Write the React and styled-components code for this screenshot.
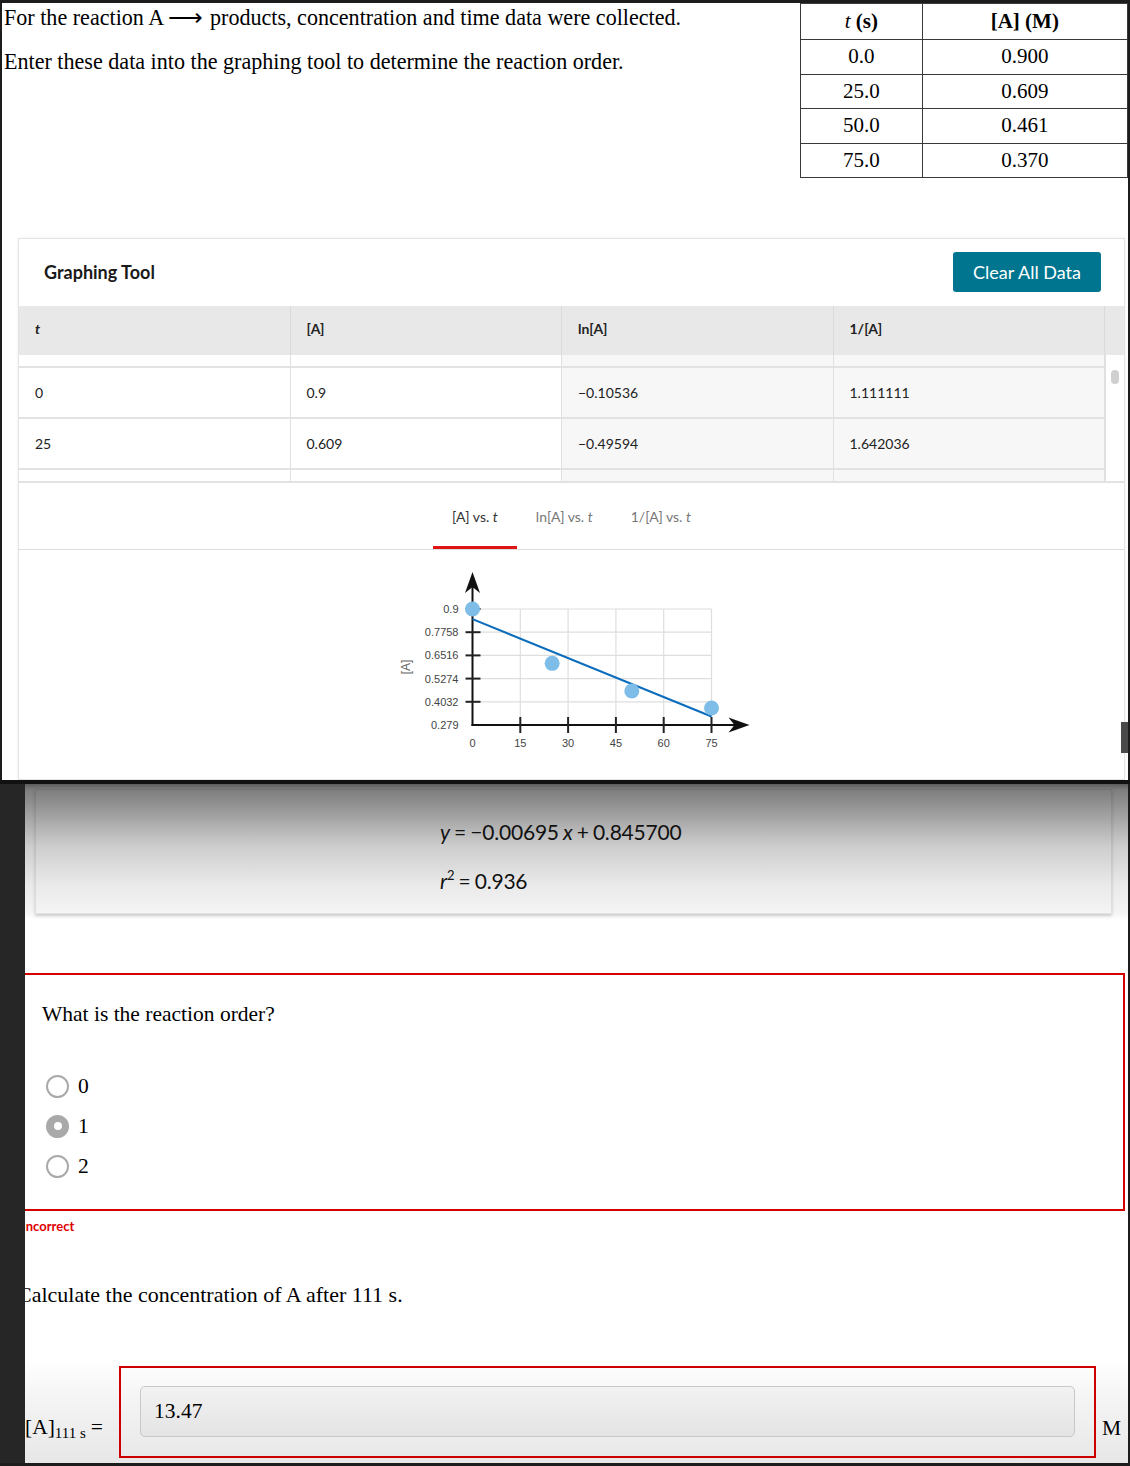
import React from "react";
import styled, { createGlobalStyle } from "styled-components";

const serif = `"Liberation Serif", "Times New Roman", serif`;
const sans = `Lato, "Open Sans", "Noto Sans", sans-serif`;

const GlobalStyle = createGlobalStyle`
  html, body { margin: 0; padding: 0; background: #fff; overflow: hidden; }
  * { box-sizing: border-box; }
`;

const Page = styled.div`
  width: 1130px;
  height: 1466px;
  display: flex;
  flex-direction: column;
`;

const TopFrame = styled.section`
  position: relative;
  flex: none;
  height: 780px;
  border-top: 3px solid #1c1c1c;
  border-left: 2px solid #1c1c1c;
  border-right: 2px solid #1c1c1c;
  background: #fff;
  overflow: hidden;
`;

const WindowThumb = styled.div`
  position: absolute;
  right: 0;
  top: 719px;
  width: 7px;
  height: 31px;
  background: #4a4a4a;
`;

const Intro = styled.div`
  display: flex;
  justify-content: space-between;
  align-items: flex-start;
`;

const IntroText = styled.div`
  padding: 3px 0 0 2px;
  font-family: ${serif};
  font-size: 22.1px;
  color: #000;
`;

const IntroLine = styled.p`
  margin: 0 0 20px;
  line-height: 24px;
  white-space: nowrap;
`;

const Arrow = styled.span`
  display: inline-block;
  margin: 0 2px;
  transform: scaleX(1.1);
`;

const DataTable = styled.table`
  border-collapse: collapse;
  width: 328px;
  font-family: ${serif};
  font-size: 21px;
  color: #000;
`;

const HeadCell = styled.th`
  height: 36px;
  width: ${(p) => p.$w}px;
  border: 1px solid #3a3a3a;
  font-weight: normal;
  text-align: center;
  padding: 0;
`;

const Cell = styled.td`
  height: 34.5px;
  border: 1px solid #3a3a3a;
  text-align: center;
  padding: 0;
`;

const ToolCard = styled.div`
  margin: 60px 3px 0 16px;
  border: 1px solid #e4e4e4;
  box-shadow: 0 0 4px rgba(0, 0, 0, 0.06);
  background: #fff;
  font-family: ${sans};
  color: #222;
`;

const ToolHeader = styled.div`
  height: 67px;
  display: flex;
  align-items: center;
  justify-content: space-between;
  padding: 0 23px 2px 25px;
`;

const ToolTitle = styled.h2`
  margin: 0;
  font-size: 18px;
  font-weight: 700;
  color: #1a1a1a;
`;

const ClearButton = styled.button`
  width: 148px;
  height: 40px;
  border: none;
  border-radius: 3px;
  background: #007590;
  color: #fff;
  font-family: ${sans};
  font-size: 18px;
  padding: 0;
`;

const GridHead = styled.div`
  display: grid;
  grid-template-columns: repeat(4, 1fr) 19px;
  height: 49px;
  background: #e8e8e8;
`;

const GridHeadCell = styled.div`
  display: flex;
  align-items: center;
  padding: 0 0 4px 16px;
  font-size: 14px;
  font-weight: 700;
  border-right: 1px solid #dadada;
  &:last-child { border-right: none; }
`;

const GridBody = styled.div`
  display: flex;
  height: 128px;
  border-bottom: 2px solid #e2e2e2;
`;

const Rows = styled.div`
  flex: 1;
`;

const Row = styled.div`
  display: grid;
  grid-template-columns: repeat(4, 1fr);
  height: ${(p) => p.$h}px;
  border-bottom: ${(p) => (p.$last ? "none" : "2px solid #e2e2e2")};
`;

const GridCell = styled.div`
  display: flex;
  align-items: center;
  padding-left: 16px;
  font-size: 14px;
  color: #222;
  background: ${(p) => (p.$shade ? "#f7f7f7" : "#fff")};
  border-right: 1px solid #e0e0e0;
`;

const ScrollTrack = styled.div`
  width: 19px;
  border-left: 1px solid #e0e0e0;
  background: #fff;
  padding: 15px 0 0 5px;
`;

const ScrollThumb = styled.div`
  width: 8px;
  height: 14px;
  border-radius: 4px;
  background: #d0d0d0;
`;

const TabBar = styled.div`
  display: flex;
  justify-content: center;
  height: 67px;
  border-bottom: 1px solid #dddddd;
`;

const Tab = styled.div`
  display: flex;
  align-items: center;
  padding: 4px 19px 0;
  font-size: 14px;
  color: ${(p) => (p.$active ? "#333" : "#777")};
  border-bottom: 3px solid ${(p) => (p.$active ? "#e01414" : "transparent")};
`;

const ChartWrap = styled.div`
  display: flex;
  justify-content: center;
`;

const Band = styled.div`
  flex: none;
  height: 4px;
  background: #111;
`;

const LowerFrame = styled.section`
  position: relative;
  flex: 1;
  padding-top: 5px;
  border-right: 2px solid #1c1c1c;
  border-bottom: 3px solid #1c1c1c;
  overflow: hidden;
  background: linear-gradient(
    to bottom,
    #5c5c5c 0px,
    #7e7e7e 6px,
    #8e8e8e 18px,
    #cdcdcd 62px,
    #e9e9e9 100px,
    #f4f4f4 128px,
    #ffffff 136px,
    #ffffff 575px,
    #f3f3f3 620px,
    #e7e7e7 679px
  );
`;

const EdgeStrip = styled.div`
  position: absolute;
  left: 0;
  top: 0;
  bottom: 0;
  width: 25px;
  background: #262626;
  z-index: 2;
`;

const EquationPanel = styled.div`
  height: 125px;
  margin: 0 16px 0 35px;
  padding: 29px 0 0 404px;
  border: 1px solid rgba(0, 0, 0, 0.08);
  box-shadow: 0 2px 3px rgba(0, 0, 0, 0.18);
  font-family: ${sans};
  font-size: 21px;
  color: #111;
`;

const EqLine = styled.div`
  line-height: 26px;
  margin-bottom: 23px;
  white-space: nowrap;
  letter-spacing: -0.2px;
  word-spacing: -1px;
`;

const Sup = styled.sup`
  font-size: 13px;
  line-height: 0;
  vertical-align: 9px;
`;

const QuestionBox = styled.div`
  margin: 59px 3px 0 20px;
  border: 2px solid #d40000;
  padding: 26px 20px 23px;
  font-family: ${serif};
  font-size: 21.5px;
  color: #000;
`;

const QuestionText = styled.p`
  margin: 0;
  line-height: 26px;
`;

const RadioList = styled.div`
  margin-top: 39px;
`;

const RadioRow = styled.label`
  display: flex;
  align-items: center;
  gap: 9px;
  height: 40px;
  padding-left: 4px;
`;

const Radio = styled.span`
  width: 23px;
  height: 23px;
  border-radius: 50%;
  border: 2px solid #a9a9a9;
  background: ${(p) => (p.$checked ? "#a9a9a9" : "#fff")};
  display: flex;
  align-items: center;
  justify-content: center;
  &::after {
    content: "";
    width: 8px;
    height: 8px;
    border-radius: 50%;
    background: ${(p) => (p.$checked ? "#fff" : "transparent")};
  }
`;

const Feedback = styled.div`
  margin: 6px 0 0 22px;
  font-family: ${sans};
  font-size: 13px;
  font-weight: 700;
  line-height: 18px;
  color: #e00000;
`;

const Prompt = styled.p`
  margin: 47px 0 0 17px;
  font-family: ${serif};
  font-size: 22px;
  line-height: 26px;
  color: #000;
`;

const AnswerRow = styled.div`
  display: flex;
  align-items: flex-end;
  margin: 58px 0 0 25px;
  font-family: ${serif};
  font-size: 21.5px;
  color: #000;
`;

const AnswerLabel = styled.span`
  flex: none;
  width: 94px;
  line-height: 26px;
  padding-bottom: 18px;
  white-space: nowrap;
`;

const Sub = styled.sub`
  font-size: 15px;
  line-height: 0;
  vertical-align: -4px;
  margin-right: 5px;
`;

const AnswerBox = styled.div`
  width: 977px;
  height: 92px;
  border: 2px solid #cc0000;
  padding: 18px 19px;
`;

const AnswerInput = styled.div`
  height: 51px;
  border: 1px solid #c8c8c8;
  border-radius: 5px;
  background: linear-gradient(to bottom, #f2f2f2, #e4e4e4);
  padding: 11px 13px 0;
  line-height: 26px;
`;

const Unit = styled.span`
  line-height: 26px;
  padding-bottom: 17px;
  margin-left: 6px;
`;

const X = (t) => 472 + (t * 239) / 75;
const Y = (v) => 726 - ((v - 0.279) / 0.621) * 116;

const yTicks = [0.9, 0.7758, 0.6516, 0.5274, 0.4032];
const yLabels = ["0.9", "0.7758", "0.6516", "0.5274", "0.4032", "0.279"];
const yVals = [0.9, 0.7758, 0.6516, 0.5274, 0.4032, 0.279];
const xTicks = [15, 30, 45, 60, 75];
const points = [
  [0, 0.9],
  [25, 0.609],
  [50, 0.461],
  [75, 0.37],
];

function Chart() {
  return (
    <svg width="400" height="229" viewBox="0 0 400 229">
      <g transform="translate(-371.5,-551)" fontFamily='"Liberation Sans", Arial, sans-serif'>
        {yTicks.map((v) => (
          <line key={"gh" + v} x1={472} x2={711} y1={Y(v)} y2={Y(v)} stroke="#dedede" strokeWidth="1.2" />
        ))}
        {xTicks.map((t) => (
          <line key={"gv" + t} x1={X(t)} x2={X(t)} y1={610} y2={726} stroke="#dedede" strokeWidth="1.2" />
        ))}
        <line x1="472" y1="727" x2="472" y2="586" stroke="#111" strokeWidth="2" />
        <polygon points="472,573 464.5,594 472,588 479.5,594" fill="#111" />
        <line x1="471" y1="726" x2="735" y2="726" stroke="#111" strokeWidth="2" />
        <polygon points="749,726 728,718.5 734,726 728,733.5" fill="#111" />
        {yTicks.map((v) => (
          <line key={"yt" + v} x1={465} x2={480} y1={Y(v)} y2={Y(v)} stroke="#222" strokeWidth="2" />
        ))}
        {xTicks.map((t) => (
          <line key={"xt" + t} x1={X(t)} x2={X(t)} y1={718} y2={734} stroke="#222" strokeWidth="2" />
        ))}
        {yVals.map((v, i) => (
          <text key={"yl" + v} x={458} y={Y(v) + 4} textAnchor="end" fontSize="11" fill="#444">
            {yLabels[i]}
          </text>
        ))}
        {[0, ...xTicks].map((t) => (
          <text key={"xl" + t} x={X(t)} y={748} textAnchor="middle" fontSize="11" fill="#444">
            {t}
          </text>
        ))}
        <text x="409" y="668" fontSize="12" fill="#666" textAnchor="middle" transform="rotate(-90 409 668)">
          [A]
        </text>
        <line x1={X(0)} y1={Y(0.8457)} x2={X(75)} y2={Y(0.8457 - 0.00695 * 75)} stroke="#0a6cbd" strokeWidth="2" />
        {points.map(([t, v]) => (
          <circle key={"p" + t} cx={X(t)} cy={Y(v)} r="7.5" fill="#7dbde8" />
        ))}
      </g>
    </svg>
  );
}

const gridRows = [
  ["0", "0.9", "\u22120.10536", "1.111111"],
  ["25", "0.609", "\u22120.49594", "1.642036"],
];

export default function App() {
  return (
    <Page>
      <GlobalStyle />
      <TopFrame>
        <Intro>
          <IntroText>
            <IntroLine>
              For the reaction A <Arrow>{"\u27F6"}</Arrow> products, concentration and time data were collected.
            </IntroLine>
            <IntroLine>Enter these data into the graphing tool to determine the reaction order.</IntroLine>
          </IntroText>
          <DataTable>
            <thead>
              <tr>
                <HeadCell $w={122}>
                  <i>t</i> <b>(s)</b>
                </HeadCell>
                <HeadCell $w={206}>
                  <b>[A] (M)</b>
                </HeadCell>
              </tr>
            </thead>
            <tbody>
              {[
                ["0.0", "0.900"],
                ["25.0", "0.609"],
                ["50.0", "0.461"],
                ["75.0", "0.370"],
              ].map(([t, a]) => (
                <tr key={t}>
                  <Cell>{t}</Cell>
                  <Cell>{a}</Cell>
                </tr>
              ))}
            </tbody>
          </DataTable>
        </Intro>

        <ToolCard>
          <ToolHeader>
            <ToolTitle>Graphing Tool</ToolTitle>
            <ClearButton>Clear All Data</ClearButton>
          </ToolHeader>
          <GridHead>
            <GridHeadCell>
              <i>t</i>
            </GridHeadCell>
            <GridHeadCell>[A]</GridHeadCell>
            <GridHeadCell>ln[A]</GridHeadCell>
            <GridHeadCell>1/[A]</GridHeadCell>
            <GridHeadCell />
          </GridHead>
          <GridBody>
            <Rows>
              <Row $h={13}>
                <GridCell />
                <GridCell />
                <GridCell $shade />
                <GridCell $shade />
              </Row>
              {gridRows.map((r) => (
                <Row key={r[0]} $h={51}>
                  <GridCell>{r[0]}</GridCell>
                  <GridCell>{r[1]}</GridCell>
                  <GridCell $shade>{r[2]}</GridCell>
                  <GridCell $shade>{r[3]}</GridCell>
                </Row>
              ))}
              <Row $h={11} $last>
                <GridCell />
                <GridCell />
                <GridCell $shade />
                <GridCell $shade />
              </Row>
            </Rows>
            <ScrollTrack>
              <ScrollThumb />
            </ScrollTrack>
          </GridBody>
          <TabBar>
            <Tab $active>
              [A] vs.&nbsp;<i>t</i>
            </Tab>
            <Tab>
              ln[A] vs.&nbsp;<i>t</i>
            </Tab>
            <Tab>
              1/[A] vs.&nbsp;<i>t</i>
            </Tab>
          </TabBar>
          <ChartWrap>
            <Chart />
          </ChartWrap>
        </ToolCard>
        <WindowThumb />
      </TopFrame>
      <Band />
      <LowerFrame>
        <EdgeStrip />
        <EquationPanel>
          <EqLine>
            <i>y</i> = {"\u2212"}0.00695 <i>x</i> + 0.845700
          </EqLine>
          <EqLine>
            <i>r</i>
            <Sup>2</Sup> = 0.936
          </EqLine>
        </EquationPanel>
        <QuestionBox>
          <QuestionText>What is the reaction order?</QuestionText>
          <RadioList>
            {["0", "1", "2"].map((o) => (
              <RadioRow key={o}>
                <Radio $checked={o === "1"} />
                {o}
              </RadioRow>
            ))}
          </RadioList>
        </QuestionBox>
        <Feedback>Incorrect</Feedback>
        <Prompt>Calculate the concentration of A after 111 s.</Prompt>
        <AnswerRow>
          <AnswerLabel>
            [A]<Sub>111 s</Sub>=
          </AnswerLabel>
          <AnswerBox>
            <AnswerInput>13.47</AnswerInput>
          </AnswerBox>
          <Unit>M</Unit>
        </AnswerRow>
      </LowerFrame>
    </Page>
  );
}
